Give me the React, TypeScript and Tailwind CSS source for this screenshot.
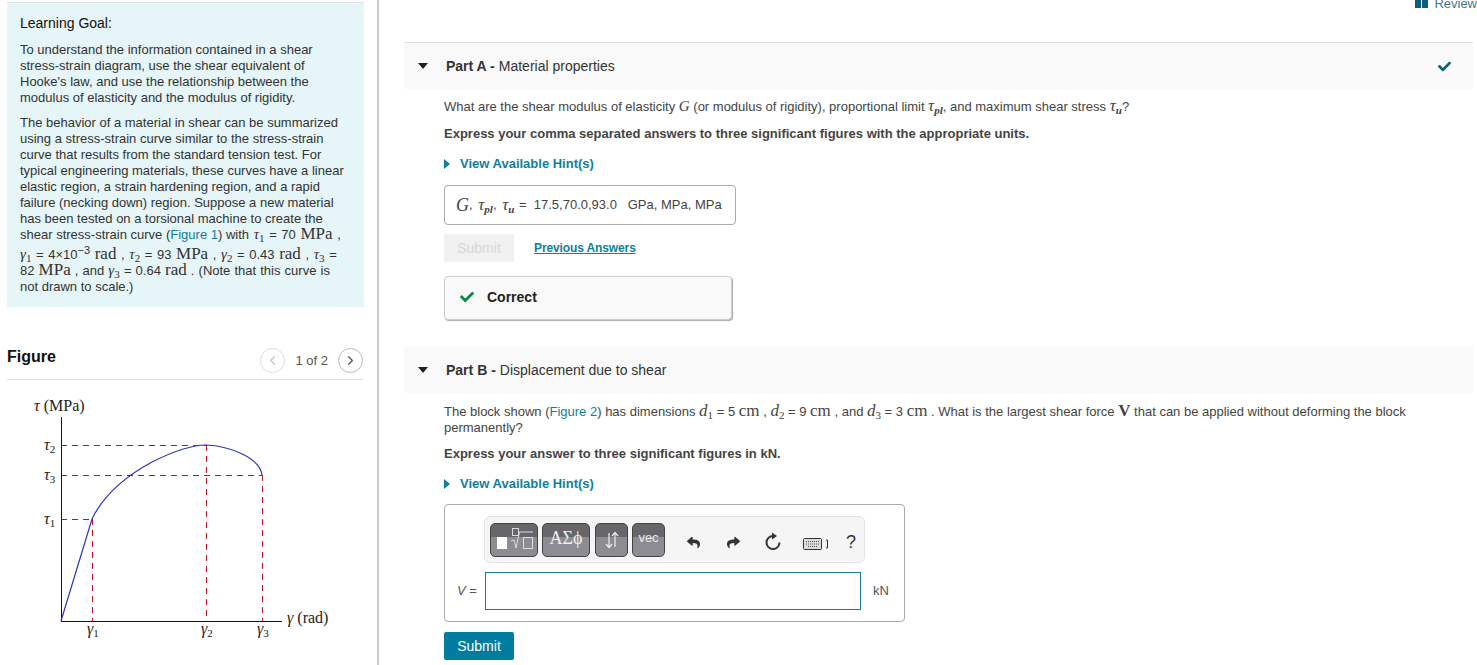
import React from 'react';
import { FaCheck, FaReply, FaShare } from 'react-icons/fa';
import { ChevronLeft, ChevronRight } from 'lucide-react';

const M = ({ children, b = false }: { children: React.ReactNode; b?: boolean }) => (
  <span className={`font-['Liberation_Serif',serif] text-[17px] leading-[10px] ${b ? 'font-bold' : ''}`}>{children}</span>
);

const Sub = ({ base, sub, it = false, big = false }: { base: string; sub: string; it?: boolean; big?: boolean }) => (
  <span className={`font-['Liberation_Serif',serif] italic leading-[10px] ${big ? 'text-[17px]' : 'text-[15px]'}`}>
    {base}
    <span className={`relative top-[3px] text-[11px] leading-[10px] ${it ? 'font-bold' : 'not-italic'}`}>{sub}</span>
  </span>
);

const Caret = () => <span className="h-0 w-0 border-x-[5px] border-t-[6px] border-x-transparent border-t-[#222]" />;

const PartHeader = ({ part, title, check }: { part: string; title: string; check?: boolean }) => (
  <div className="flex h-[46px] items-center bg-[#f9f9f9] pl-[14px] pr-[22px] text-[14px] text-[#333]">
    <Caret />
    <span className="ml-[18px] font-bold">Part {part} -</span>
    <span className="ml-[4px]">{title}</span>
    {check && <FaCheck className="ml-auto text-[13px] text-[#0b5f7c]" />}
  </div>
);

const Hint = () => (
  <div className="flex items-center font-bold text-[#0f7f9b]">
    <span className="h-0 w-0 border-y-[5px] border-l-[6px] border-y-transparent border-l-[#0f7f9b]" />
    <span className="ml-[10px]">View Available Hint(s)</span>
  </div>
);

const ToolButton = ({ w, children, className = '' }: { w: string; children: React.ReactNode; className?: string }) => (
  <div className={`${w} ${className} flex h-[34px] justify-center rounded-[5px] border border-[#444] bg-[linear-gradient(#67676b_0_42%,#8c8c92_42%_100%)] text-[#eee]`}>
    {children}
  </div>
);

const Chart = () => (
  <svg width="340" height="256" viewBox="0 -6 340 256" className="block font-['Liberation_Serif',serif]">
    <g stroke="#c1121f" strokeWidth="1" strokeDasharray="6 5" fill="none" shapeRendering="crispEdges">
      <path d="M61 45H206M61 75H262M61 119H92M92 119V221M206 45V221M262 75V221" />
    </g>
    <path d="M61 17V221H282" stroke="#111" strokeWidth="1" fill="none" shapeRendering="crispEdges" />
    <path d="M61 221L92 119C104 94 128 75 152 62C170 53 190 45 206 45C230 46 260 58 262 75" stroke="#2e36b8" strokeWidth="1.2" fill="none" />
    <g fill="#222" fontSize="16">
      <text x="34" y="11"><tspan fontStyle="italic">τ</tspan> (MPa)</text>
      <text x="287" y="223"><tspan fontStyle="italic">γ</tspan> (rad)</text>
      <text x="44" y="50" fontStyle="italic">τ<tspan fontSize="11" dy="3" fontStyle="normal">2</tspan></text>
      <text x="44" y="80" fontStyle="italic">τ<tspan fontSize="11" dy="3" fontStyle="normal">3</tspan></text>
      <text x="44" y="124" fontStyle="italic">τ<tspan fontSize="11" dy="3" fontStyle="normal">1</tspan></text>
      <text x="87" y="234" fontStyle="italic">γ<tspan fontSize="11" dy="3" fontStyle="normal">1</tspan></text>
      <text x="201" y="234" fontStyle="italic">γ<tspan fontSize="11" dy="3" fontStyle="normal">2</tspan></text>
      <text x="257" y="234" fontStyle="italic">γ<tspan fontSize="11" dy="3" fontStyle="normal">3</tspan></text>
    </g>
  </svg>
);

const Toolbar = () => (
  <div className="flex h-[47px] w-[381px] items-center rounded-[6px] border border-[#e3e3e3] bg-[#f5f5f5] pl-[5px]">
    <ToolButton w="w-[48px]" className="items-center">
      <svg width="46" height="32" viewBox="0 0 46 32" fill="none">
        <rect x="6" y="13" width="10" height="12" fill="#fff" />
        <path d="M20 17l3-1 2 8 3.500-16h13.500" stroke="#ddd" strokeWidth="1" />
        <rect x="21.500" y="4.500" width="6" height="7" stroke="#ddd" />
        <rect x="32.500" y="13.500" width="9" height="11" stroke="#ddd" />
      </svg>
    </ToolButton>
    <ToolButton w="w-[48px]" className="ml-[4px] items-center pb-[4px] font-['Liberation_Serif',serif] text-[18px]">ΑΣϕ</ToolButton>
    <ToolButton w="w-[33px]" className="ml-[5px] items-center">
      <svg width="16" height="20" viewBox="0 0 16 20" fill="none" stroke="#eee" strokeWidth="1.200">
        <path d="M5 3v14M2 14l3 3.500 3-3.500" />
        <path d="M11 17V3M8 6l3-3.500 3 3.500" />
      </svg>
    </ToolButton>
    <ToolButton w="w-[33px]" className="ml-[4px] items-start pt-[6px] text-[13px]">vec</ToolButton>
    <FaReply className="ml-[22px] mt-[6px] text-[13px] text-[#333]" />
    <FaShare className="ml-[27px] mt-[6px] text-[13px] text-[#333]" />
    <svg width="18" height="19" viewBox="0 0 18 19" className="ml-[24px] mt-[4px]" fill="none">
      <path d="M9 4A6.500 6.500 0 1 0 15.500 10.500" stroke="#333" strokeWidth="2" />
      <path d="M8 0.500l5 3.500-5 3.500z" fill="#333" />
    </svg>
    <svg width="28" height="12" viewBox="0 0 28 12" className="ml-[21px] mt-[8px]" fill="none">
      <rect x="0.5" y="0.5" width="18" height="11" rx="1" fill="#ddd" stroke="#333" />
      <path d="M3 3.500h13M3 6h13M5 8.500h9" stroke="#555" strokeDasharray="1 1" />
      <path d="M23 2h1.500v8H23" stroke="#333" />
    </svg>
    <span className="ml-[15px] mt-[5px] text-[18px] text-[#333]">?</span>
  </div>
);

export default function App() {
  return (
    <div className="flex h-[665px] w-[1477px] overflow-hidden bg-white font-['Liberation_Sans',Arial,sans-serif] text-[13px] leading-[16px] text-[#444]">
      {/* left column */}
      <aside className="h-full w-[379px] shrink-0 border-r-2 border-[#c3ccd2] pl-[7px] pt-[2px]">
        <div className="h-[305px] w-[357px] border-t border-[#dce3e6] bg-[#e5f5f8] px-[13px] pt-[12px] text-[#333]">
          <p className="text-[14px] font-medium text-[#111]">Learning Goal:</p>
          <p className="mt-[11px]">
            To understand the information contained in a shear<br />
            stress-strain diagram, use the shear equivalent of<br />
            Hooke's law, and use the relationship between the<br />
            modulus of elasticity and the modulus of rigidity.
          </p>
          <p className="mt-[9px]">
            The behavior of a material in shear can be summarized<br />
            using a stress-strain curve similar to the stress-strain<br />
            curve that results from the standard tension test. For<br />
            typical engineering materials, these curves have a linear<br />
            elastic region, a strain hardening region, and a rapid<br />
            failure (necking down) region. Suppose a new material<br />
            has been tested on a torsional machine to create the<br />
            shear stress-strain curve (<span className="text-[#0f7f9b]">Figure 1</span>) <span className="[word-spacing:1px]">with <Sub base="τ" sub="1" /> = 70 <M>MPa</M> ,</span>
            <span className="mt-[4px] block [word-spacing:1px]">
              <Sub base="γ" sub="1" /> = 4×10<sup className="text-[11px] leading-none">−3</sup> <M>rad</M> , <Sub base="τ" sub="2" /> = 93 <M>MPa</M> , <Sub base="γ" sub="2" /> = 0.43 <M>rad</M> , <Sub base="τ" sub="3" /> =
            </span>
            <span className="block [word-spacing:0.5px]">
              82 <M>MPa</M> , and <Sub base="γ" sub="3" /> = 0.64 <M>rad</M> . (Note that this curve is
            </span>
            <span className="block">not drawn to scale.)</span>
          </p>
        </div>

        <div className="mt-[36px] flex h-[37px] w-[356px] items-start justify-between border-b border-[#d9dee0]">
          <span className="mt-[4px] text-[16px] font-bold leading-[20px] text-[#111]">Figure</span>
          <div className="mt-[5px] flex items-center text-[#555]">
            <span className="flex h-[25px] w-[25px] items-center justify-center rounded-full border border-[#ddd]">
              <ChevronLeft size={15} className="text-[#c5c5c5]" />
            </span>
            <span className="mx-[10px]">1 of 2</span>
            <span className="flex h-[25px] w-[25px] items-center justify-center rounded-full border border-[#bbb]">
              <ChevronRight size={15} className="text-[#555]" />
            </span>
          </div>
        </div>
        <div className="-ml-[7px] mt-[14px]">
          <Chart />
        </div>
      </aside>

      {/* right column */}
      <main className="min-w-0 flex-1 pl-[25px] pr-[4px]">
        <div className="-mt-[3px] flex h-[14px] items-center justify-end text-[#45768c]">
          <svg width="13" height="10" viewBox="0 0 13 10" className="-mt-[2px] mr-[6px]">
            <rect x="0" y="0" width="6" height="10" fill="#0b5f7c" />
            <rect x="7" y="0" width="6" height="10" fill="#0b5f7c" />
          </svg>
          <span className="mr-[-4px]">Review</span>
        </div>

        <div className="mt-[31px] border-t border-[#dfdfdf]">
          <PartHeader part="A" title="Material properties" check />
        </div>
        <div className="pl-[40px]">
          <p className="mt-[10px]">
            What are the shear modulus of elasticity <i className="font-['Liberation_Serif',serif] text-[15px] leading-[10px]">G</i> (or modulus of rigidity), proportional limit <Sub base="τ" sub="pl" it big />, and maximum shear stress <Sub base="τ" sub="u" it big />?
          </p>
          <p className="mt-[11px] font-bold">Express your comma separated answers to three significant figures with the appropriate units.</p>
          <div className="mt-[14px]"><Hint /></div>

          <div className="mt-[13px] flex h-[40px] w-[292px] items-center rounded-[4px] border border-[#aaa] pl-[11px]">
            <i className="font-['Liberation_Serif',serif] text-[18px] leading-none">G</i>
            <span className="mr-[2px]">,&nbsp;</span><Sub base="τ" sub="pl" it big /><span className="mr-[2px]">,&nbsp;</span><Sub base="τ" sub="u" it big />
            <span className="ml-[1px] whitespace-pre"> =  17.5,70.0,93.0   GPa, MPa, MPa</span>
          </div>

          <div className="mt-[9px] flex items-center">
            <span className="flex h-[28px] w-[70px] items-center justify-center rounded-[2px] bg-[#f1f1f1] text-[14px] text-[#d6d6d6]">Submit</span>
            <span className="ml-[20px] text-[12px] font-bold tracking-[-0.01em] text-[#0f7f9b] underline">Previous Answers</span>
          </div>

          <div className="mt-[14px] flex h-[44px] w-[288px] items-center rounded-[4px] border border-[#ccc] bg-[#f9f9f9] pb-[2px] pl-[15px] shadow-[1px_1px_1px_#aaa]">
            <FaCheck className="text-[14px] text-[#0a8a43]" />
            <span className="ml-[13px] text-[14px] font-bold text-[#222]">Correct</span>
          </div>
        </div>

        <div className="mt-[27px]">
          <PartHeader part="B" title="Displacement due to shear" />
        </div>
        <div className="pl-[40px]">
          <p className="mt-[11px] w-[980px]">
            The block shown (<span className="text-[#0f7f9b]">Figure 2</span>) has dimensions <Sub base="d" sub="1" big /> = 5 <M>cm</M> , <Sub base="d" sub="2" big /> = 9 <M>cm</M> , and <Sub base="d" sub="3" big /> = 3 <M>cm</M> . What is the largest shear force <M b>V</M> that can be applied without deforming the block permanently?
          </p>
          <p className="mt-[10px] font-bold">Express your answer to three significant figures in kN.</p>
          <div className="mt-[14px]"><Hint /></div>

          <div className="mt-[12px] h-[118px] w-[461px] rounded-[4px] border border-[#aaa] pl-[12px] pt-[11px]">
            <div className="ml-[27px]"><Toolbar /></div>
            <div className="mt-[9px] flex items-center">
              <span className="w-[28px] text-[#555]"><i>V</i> =</span>
              <div className="h-[38px] w-[376px] border border-[#147a96]" />
              <span className="ml-[12px] text-[#555]">kN</span>
            </div>
          </div>

          <div className="mt-[10px] flex h-[28px] w-[70px] items-center justify-center rounded-[2px] bg-[#007c9f] text-[14px] font-medium text-white">Submit</div>
        </div>
      </main>
    </div>
  );
}
